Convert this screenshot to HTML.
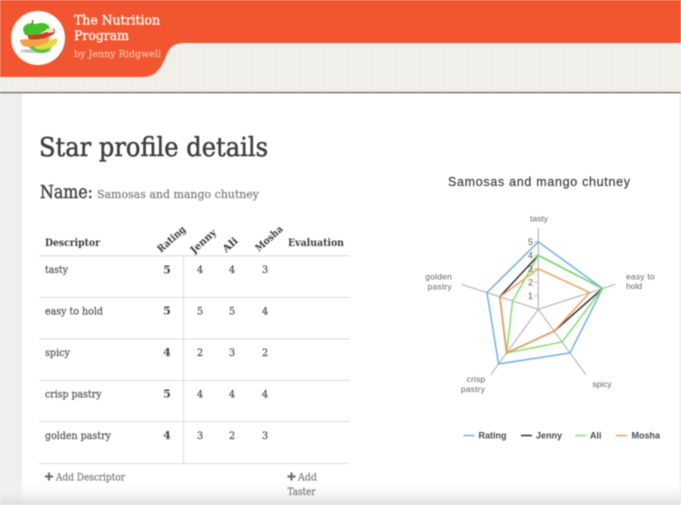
<!DOCTYPE html>
<html><head><meta charset="utf-8"><style>
html,body{margin:0;padding:0;width:681px;height:505px;overflow:hidden;background:#fff}
svg{display:block;filter:blur(.4px)}
.s{font-family:"DejaVu Serif","Liberation Serif",serif}
.a{font-family:"Liberation Sans",sans-serif}
.t{stroke-width:.3px;paint-order:stroke}
</style></head><body>
<svg width="681" height="505" viewBox="0 0 681 505" xmlns="http://www.w3.org/2000/svg">
<defs><linearGradient id="fade" x1="0" y1="0" x2="0" y2="1"><stop offset="0" stop-color="#fff" stop-opacity="0"/><stop offset="1" stop-color="#dedede"/></linearGradient>
<pattern id="tx" width="6" height="5" patternUnits="userSpaceOnUse"><rect width="6" height="5" fill="#f1efea"/><path d="M0 0V5" stroke="#eeece7" stroke-width="1"/></pattern></defs>
<rect width="681" height="505" fill="#fff"/>
<rect x="0" y="93" width="22" height="412" fill="#efefef"/>
<rect x="679.500" y="93" width="2" height="412" fill="#efefef"/>
<rect x="0" y="480" width="681" height="25" fill="url(#fade)"/>
<rect x="0" y="0" width="681" height="92" fill="url(#tx)"/>
<rect x="0" y="92" width="681" height="1.200" fill="#62625e"/>
<path d="M0 0H681V43H185C172 43 169 49 166 56C161 69 155 77 143 77H0Z" fill="#f25630"/>
<circle cx="38" cy="38" r="27" fill="#fff"/>
<ellipse cx="36" cy="51" rx="16" ry="2" fill="#c4c4c4"/>
<path d="M27 46C33 50 38 54 44 53C47 52 50 50 52 47Z" fill="#58c23c"/>
<path d="M33 44L57 38C58 42 56 46 50 48C44 50 38 50 35 48Z" fill="#dddc46"/>
<path d="M20 40C28 38 42 38 50 37L48 42C44 46 28 48 23 46C21 44 20 42 20 40Z" fill="#f2a445"/>
<path d="M23 30C23 24 30 22 36 24C42 22 48 23 50 28L36 36L25 35Z" fill="#46c02a"/>
<path d="M27 35C36 36 46 33 54 28L55 32C53 37 38 41 29 39Z" fill="#cf3d24"/>
<path d="M46 29L53 28L54 32L48 33Z" fill="#f3e6d0"/>
<path d="M32 24L33 20" stroke="#7a4a30" stroke-width="1.200" fill="none"/>
<g class="s t" fill="#fff" stroke="#fff">
<text x="74" y="24.500" font-size="13" textLength="86" lengthAdjust="spacingAndGlyphs">The Nutrition</text>
<text x="74" y="40" font-size="13" textLength="55" lengthAdjust="spacingAndGlyphs">Program</text>
</g>
<text class="s" x="74" y="57" font-size="9.500" fill="#fcc2af" stroke="#fcc2af" stroke-width=".15" textLength="87" lengthAdjust="spacingAndGlyphs">by Jenny Ridgwell</text>
<g class="s" fill="#404040" stroke="#404040">
<text x="39" y="156" font-size="26" stroke-width=".55" textLength="229" lengthAdjust="spacingAndGlyphs">Star profile details</text>
<text x="40" y="198" font-size="17.500" stroke-width=".4" textLength="53" lengthAdjust="spacingAndGlyphs">Name:</text>
<text x="97" y="198" font-size="11" fill="#7c7c7c" stroke="#7c7c7c" stroke-width=".2" textLength="162" lengthAdjust="spacingAndGlyphs">Samosas and mango chutney</text>
</g>
<g class="s" font-size="10" font-weight="bold" fill="#3c3c3c">
<text x="45" y="246" textLength="55" lengthAdjust="spacingAndGlyphs">Descriptor</text>
<text x="288" y="246" textLength="56" lengthAdjust="spacingAndGlyphs">Evaluation</text>
<text transform="translate(161,253) rotate(-42)" textLength="34" lengthAdjust="spacingAndGlyphs">Rating</text>
<text transform="translate(194,254) rotate(-42)" textLength="31" lengthAdjust="spacingAndGlyphs">Jenny</text>
<text transform="translate(226,253) rotate(-42)" textLength="17" lengthAdjust="spacingAndGlyphs">Ali</text>
<text transform="translate(259,252) rotate(-42)" textLength="33" lengthAdjust="spacingAndGlyphs">Mosha</text>
</g>
<rect x="39" y="255" width="311" height="1.500" fill="#e6e6e6"/>
<g fill="#dcdcdc">
<rect x="39" y="297" width="311" height="1"/>
<rect x="39" y="338.500" width="311" height="1"/>
<rect x="39" y="380" width="311" height="1"/>
<rect x="39" y="421" width="311" height="1"/>
<rect x="39" y="463" width="311" height="1"/>
<rect x="183" y="256" width="1" height="207"/>
</g>
<g class="s" font-size="10" fill="#555" stroke="#555" stroke-width=".22">
<text x="45" y="273" textLength="23" lengthAdjust="spacingAndGlyphs">tasty</text>
<text x="45" y="314.500" textLength="58" lengthAdjust="spacingAndGlyphs">easy to hold</text>
<text x="45" y="356" textLength="25" lengthAdjust="spacingAndGlyphs">spicy</text>
<text x="45" y="397.500" textLength="56.500" lengthAdjust="spacingAndGlyphs">crisp pastry</text>
<text x="45" y="439" textLength="66" lengthAdjust="spacingAndGlyphs">golden pastry</text>
</g>
<g class="s" font-size="11" font-weight="bold" fill="#444" text-anchor="middle">
<text x="167" y="273.500">5</text><text x="167" y="314.500">5</text><text x="167" y="356">4</text><text x="167" y="397.500">5</text><text x="167" y="439">4</text>
</g>
<g class="s" font-size="10" fill="#555" stroke="#555" stroke-width=".22" text-anchor="middle">
<text x="200" y="273">4</text><text x="232" y="273">4</text><text x="265" y="273">3</text>
<text x="200" y="314.500">5</text><text x="232" y="314.500">5</text><text x="265" y="314.500">4</text>
<text x="200" y="356">2</text><text x="232" y="356">3</text><text x="265" y="356">2</text>
<text x="200" y="397.500">4</text><text x="232" y="397.500">4</text><text x="265" y="397.500">4</text>
<text x="200" y="439">3</text><text x="232" y="439">2</text><text x="265" y="439">3</text>
</g>
<path d="M49 472.500V480.500M45 476.500H53M291.500 472.500V480.500M287.500 476.500H295.500" stroke="#707070" stroke-width="2.200"/>
<g class="s" font-size="10" fill="#7a7a7a" stroke="#7a7a7a" stroke-width=".2">
<text x="56" y="480.500" textLength="69" lengthAdjust="spacingAndGlyphs">Add Descriptor</text>
<text x="298" y="480.500" textLength="19" lengthAdjust="spacingAndGlyphs">Add</text>
<text x="287.500" y="495" textLength="28" lengthAdjust="spacingAndGlyphs">Taster</text>
</g>
<text class="a" x="448" y="186" font-size="12.500" fill="#3a3a3a" stroke="#3a3a3a" stroke-width=".15" textLength="182" lengthAdjust="spacing">Samosas and mango chutney</text>
<g stroke="#b8b8b8" stroke-width="1.200" fill="none">
<path d="M538.300 228V309.300M538.300 309.300L615.300 284.300M538.300 309.300L585.900 374.800M538.300 309.300L490.700 374.800M538.300 309.300L461.300 284.300"/>
<path d="M534 282.300H538.300M534 295.800H538.300M534 268.800H538.300M534 255.300H538.300M534 241.800H538.300" stroke-width=".8"/>
</g>
<g fill="none" stroke-width="1.500" stroke-linejoin="miter">
<path d="M538.300 241.800L602.500 288.500L570 353L498.600 363.900L486.900 292.600Z" stroke="#72b0ec"/>
<path d="M538.300 255.300L602.500 288.500L554.200 331.100L506.600 353L499.800 296.800Z" stroke="#303034"/>
<path d="M538.300 255.300L602.500 288.500L562.100 342L506.600 353L512.600 301Z" stroke="#84e070"/>
<path d="M538.300 268.800L589.700 292.600L554.200 331.100L506.600 353L499.800 296.800Z" stroke="#f0a060"/>
</g>
<g class="a" font-size="8.500" fill="#666">
<g text-anchor="end" fill="#5f5f5f" font-size="9">
<text x="533" y="245">5</text><text x="533" y="258.500">4</text><text x="533" y="272">3</text><text x="533" y="285.500">2</text><text x="533" y="299">1</text>
</g>
<text x="539" y="221.500" text-anchor="middle">tasty</text>
<text x="626" y="279.500" letter-spacing=".2">easy to</text><text x="626" y="289">hold</text>
<text x="602" y="387" text-anchor="middle">spicy</text>
<text x="476" y="382" text-anchor="middle" letter-spacing=".2">crisp</text><text x="473" y="392" text-anchor="middle" letter-spacing=".2">pastry</text>
<text x="452" y="279.500" text-anchor="end" letter-spacing=".2">golden</text><text x="452" y="289.500" text-anchor="end" letter-spacing=".2">pastry</text>
</g>
<g stroke-width="1.500">
<path d="M463.500 435.500H474.500" stroke="#72b0ec"/>
<path d="M521 435.500H532" stroke="#303034"/>
<path d="M575 435.500H586" stroke="#84e070"/>
<path d="M616 435.500H627" stroke="#f0a060"/>
</g>
<g class="a" font-size="9" font-weight="bold" fill="#4a4a4a">
<text x="478.500" y="438.500">Rating</text>
<text x="536" y="438.500">Jenny</text>
<text x="590" y="438.500">Ali</text>
<text x="631.500" y="438.500">Mosha</text>
</g>
</svg>
</body></html>
